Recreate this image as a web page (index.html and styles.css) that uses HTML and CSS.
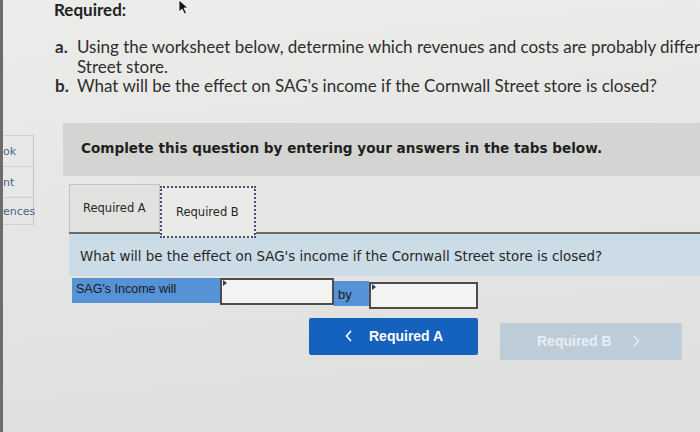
FILE: index.html
```html
<!DOCTYPE html>
<html lang="en">
<head>
<meta charset="utf-8">
<title>Required</title>
<link rel="stylesheet" href="styles.css">
</head>
<body>
<div class="page">
  <div class="edge"></div>
  <nav class="side">
    <div class="side-item">ok</div>
    <div class="side-item">nt</div>
    <div class="side-item">ences</div>
  </nav>
  <main class="main">
    <h2 class="title">Required:</h2>
    <ol class="qlist">
      <li><b>a.</b><span>Using the worksheet below, determine which revenues and costs are probably different for the Cornwall<br>Street store.</span></li>
      <li><b>b.</b><span>What will be the effect on SAG's income if the Cornwall Street store is closed?</span></li>
    </ol>
    <div class="banner">Complete this question by entering your answers in the tabs below.</div>
    <div class="tabs">
      <div class="tab">Required A</div>
      <div class="tab tab-active">Required B</div>
    </div>
    <div class="panel">What will be the effect on SAG's income if the Cornwall Street store is closed?</div>
    <div class="answer">
      <div class="lbl">SAG's Income will</div>
      <div class="inp inp-1"></div>
      <div class="lbl lbl-by">by</div>
      <div class="inp inp-2"></div>
    </div>
    <div class="nav-buttons">
      <div class="btn btn-prev">
        <svg class="chev" width="8" height="12" viewBox="0 0 8 12"><polyline points="6,1 1.5,6 6,11" fill="none" stroke="#fff" stroke-width="1.6"/></svg>
        <span>Required A</span>
      </div>
      <div class="btn btn-next">
        <span>Required B</span>
        <svg class="chev" width="8" height="12" viewBox="0 0 8 12"><polyline points="2,1 6.5,6 2,11" fill="none" stroke="#e4ebf1" stroke-width="1.6"/></svg>
      </div>
    </div>
  </main>
  <svg class="cursor" width="12" height="16" viewBox="0 0 12 16"><path d="M1 0 L1 12 L4 9 L6.5 14 L8.5 13 L6 8 L10 8 Z" fill="#111" stroke="#fff" stroke-width="0.8"/></svg>
</div>
</body>
</html>
```
FILE: styles.css
```css
* { box-sizing: border-box; }
html, body { margin: 0; padding: 0; }
body {
  width: 700px;
  height: 432px;
  overflow: hidden;
  background: linear-gradient(175deg, #ecedeb 0%, #e6e7e5 45%, #dedfdd 100%);
  color: #2b2b2b;
  font-family: Lato, "Liberation Sans", sans-serif;
}
.page { display: flex; height: 432px; position: relative; }
.edge { width: 3px; flex: none; background: #6c6c6c; }
.side { width: 31px; flex: none; padding-top: 135px; }
.side-item {
  height: 31px;
  border-top: 1px solid #cfd0ce;
  border-right: 1px solid #c6c7c5;
  display: flex;
  align-items: center;
  font: 11px "DejaVu Sans", sans-serif;
  color: #45638f;
}
.side-item:last-child { height: 28px; border-bottom: 1px solid #cfd0ce; }
.main { flex: 1; min-width: 0; }

.title { margin: 0 0 0 20px; font-size: 17px; line-height: 20px; font-weight: 700; color: #222; }
.qlist {
  list-style: none;
  margin: 17px 0 0 21px;
  padding: 0;
  font-size: 17px;
  line-height: 19.5px;
  white-space: nowrap;
  color: #2e2e2e;
}
.qlist li { display: flex; }
.qlist b { width: 22px; flex: none; font-weight: 700; }

.banner {
  margin: 27px 0 0 29px;
  width: 700px;
  height: 53px;
  background: #d4d5d3;
  display: flex;
  align-items: center;
  padding: 0 0 3px 18px;
  font: bold 13.6px "DejaVu Sans", sans-serif;
  color: #1f1f1f;
  white-space: nowrap;
}

.tabs {
  margin: 8px 0 0 35px;
  height: 50px;
  display: flex;
  align-items: flex-start;
  border-bottom: 2px solid #6a6a6a;
}
.tab {
  height: 48px;
  padding: 0 0 0 13px;
  width: 91px;
  display: flex;
  align-items: center;
  background: #e1e2e0;
  border: 1px solid #c4c5c3;
  border-bottom: none;
  font: 11.5px "DejaVu Sans", sans-serif;
  color: #262626;
}
.tab-active {
  width: 96px;
  height: 52px;
  margin-top: 2px;
  padding-left: 14px;
  background: #eaeae9;
  border: 2px dotted #45507a;
  position: relative;
  z-index: 1;
}

.panel {
  margin-left: 35px;
  width: 700px;
  height: 42px;
  padding: 15px 0 0 11px;
  background: #cbdce7;
  font: 13.4px/16px "DejaVu Sans", sans-serif;
  color: #262626;
  white-space: nowrap;
}

.answer { display: flex; align-items: flex-start; margin: 2px 0 0 38px; }
.lbl {
  width: 148px;
  height: 25px;
  padding: 4px 0 0 4px;
  background: #5692d6;
  font: 12.5px "Liberation Sans", Arial, sans-serif;
  color: #1b1b1b;
}
.lbl-by { width: 35px; margin-top: 3px; padding: 6px 0 0 4px; font-size: 13px; }
.inp {
  height: 27px;
  border: 2px solid #4d4d4d;
  background: #f3f3f2;
  position: relative;
}
.inp::before {
  content: "";
  position: absolute;
  top: 0;
  left: 1px;
  border-left: 4px solid #33405c;
  border-top: 3px solid transparent;
  border-bottom: 3px solid transparent;
}
.inp-1 { width: 114px; }
.inp-2 { width: 109px; margin-top: 4px; }

.nav-buttons { display: flex; align-items: flex-start; gap: 22px; margin: 9px 0 0 275px; }
.btn {
  height: 37px;
  display: flex;
  align-items: center;
  border-radius: 2px;
  font: bold 14px "Liberation Sans", Arial, sans-serif;
}
.btn-prev { width: 169px; padding-left: 36px; gap: 16px; background: #1461be; color: #fff; }
.btn-next { width: 182px; margin-top: 5px; padding-left: 37px; gap: 20px; background: #bdccd9; color: #e7eef4; }
.chev { flex: none; }

.cursor { position: absolute; left: 178px; top: 0; }
```
